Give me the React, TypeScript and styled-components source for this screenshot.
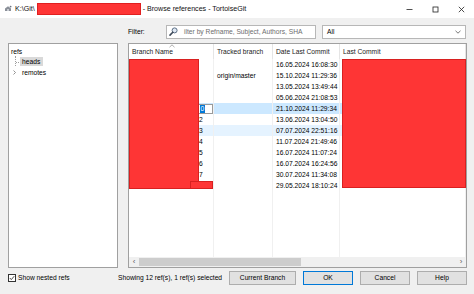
import styled, { createGlobalStyle, css } from 'styled-components';

const dates = [
  '16.05.2024 16:08:30',
  '15.10.2024 11:29:36',
  '13.05.2024 13:49:44',
  '05.06.2024 21:08:53',
  '21.10.2024 11:29:34',
  '13.06.2024 13:04:50',
  '07.07.2024 22:51:16',
  '11.07.2024 21:49:46',
  '16.07.2024 11:07:24',
  '16.07.2024 16:24:56',
  '30.07.2024 11:34:08',
  '29.05.2024 18:10:24',
];

// visible tail of each (redacted) branch name
const tails = ['', '', '', '', '', '2', '3', '4', '5', '6', '7', ''];
const tracked = ['', 'origin/master', '', '', '', '', '', '', '', '', '', ''];

const SELECTED = 4;
const HOT = 6;

const GlobalStyle = createGlobalStyle`
  html, body {
    margin: 0;
    padding: 0;
    width: 474px;
    height: 294px;
    overflow: hidden;
    background: #f0f0f0;
  }
  body {
    font-family: "Liberation Sans", Arial, sans-serif;
    font-size: 6.7px;
    color: #000;
  }
`;

const TurtleIcon = () => (
  <svg width="8" height="8" viewBox="0 0 8 8">
    <path d="M1 6 L1 3.5 L4 1.2 L7 3.5 L7 6 Z" fill="#8a8f98" />
    <rect x="3.2" y="4" width="1.6" height="2" fill="#d8dbe0" />
    <circle cx="6.6" cy="1.6" r="0.9" fill="#6b7380" />
  </svg>
);

const SearchIcon = () => (
  <svg width="9" height="9" viewBox="0 0 9 9">
    <circle cx="5.6" cy="3.4" r="2.5" fill="#dfe8f3" stroke="#5d6f86" strokeWidth="1" />
    <line x1="3.8" y1="5.3" x2="1" y2="8.1" stroke="#3e4a5a" strokeWidth="1.6" strokeLinecap="round" />
  </svg>
);

const App: React.FC = () => {
  return (
    <Window>
      <GlobalStyle />
      <TitleBar>
        <TurtleIcon />
        <TitleText>
          K:\Git\<TitleRedaction /> - Browse references - TortoiseGit
        </TitleText>
        <Controls>
          <ControlButton>
            <svg width="7" height="7" viewBox="0 0 7 7">
              <line x1="0.5" y1="3.5" x2="6.5" y2="3.5" stroke="#222" strokeWidth="0.8" />
            </svg>
          </ControlButton>
          <ControlButton>
            <svg width="7" height="7" viewBox="0 0 7 7">
              <rect x="1" y="1" width="5" height="5" fill="none" stroke="#222" strokeWidth="0.8" />
            </svg>
          </ControlButton>
          <ControlButton>
            <svg width="7" height="7" viewBox="0 0 7 7">
              <path d="M0.8 0.8 L6.2 6.2 M6.2 0.8 L0.8 6.2" stroke="#222" strokeWidth="0.8" />
            </svg>
          </ControlButton>
        </Controls>
      </TitleBar>

      <Content>
        <FilterBar>
          <FilterLabel>Filter:</FilterLabel>
          <SearchBox>
            <SearchIcon />
            <Placeholder>ilter by Refname, Subject, Authors, SHA</Placeholder>
          </SearchBox>
          <Combo>
            <span>All</span>
            <svg width="6" height="4" viewBox="0 0 6 4">
              <path d="M0.5 0.8 L3 3.2 L5.5 0.8" fill="none" stroke="#555" strokeWidth="0.8" />
            </svg>
          </Combo>
        </FilterBar>

        <TreePanel>
          <TreeRow>refs</TreeRow>
          <TreeRow>
            <Gutter $line />
            <TreeLabel $selected>heads</TreeLabel>
          </TreeRow>
          <TreeRow>
            <Gutter>
              <Expander>
                <svg width="3" height="5" viewBox="0 0 3 5">
                  <path d="M0.5 0.5 L2.5 2.5 L0.5 4.5" fill="none" stroke="#777" strokeWidth="0.8" />
                </svg>
              </Expander>
            </Gutter>
            <TreeLabel>remotes</TreeLabel>
          </TreeRow>
        </TreePanel>

        <ListPanel>
          <Header>
            <HeaderCell $col="branch">
              Branch Name
              <SortArrow>
                <svg width="6" height="4" viewBox="0 0 6 4">
                  <path d="M0.5 3.2 L3 0.8 L5.5 3.2" fill="none" stroke="#888" strokeWidth="0.7" />
                </svg>
              </SortArrow>
            </HeaderCell>
            <HeaderCell $col="tracked">Tracked branch</HeaderCell>
            <HeaderCell $col="date">Date Last Commit</HeaderCell>
            <HeaderCell $col="commit">Last Commit</HeaderCell>
          </Header>
          <Rows>
            {dates.map((d, i) => (
              <Row key={d} $state={i === SELECTED ? 'selected' : i === HOT ? 'hot' : 'none'}>
                <Cell $col="branch">
                  {i === SELECTED ? (
                    <EditBox>
                      <SelectedText>0</SelectedText>
                    </EditBox>
                  ) : (
                    <BranchTail>{tails[i]}</BranchTail>
                  )}
                </Cell>
                <Cell $col="tracked">{tracked[i]}</Cell>
                <Cell $col="date">{d}</Cell>
                <Cell $col="commit" />
              </Row>
            ))}
            <Filler>
              <Cell $col="branch" />
              <Cell $col="tracked" />
              <Cell $col="date" />
              <Cell $col="commit" />
            </Filler>
          </Rows>
          <ScrollBar>
            <ScrollArrow>‹</ScrollArrow>
            <Track>
              <Thumb />
            </Track>
            <ScrollArrow>›</ScrollArrow>
          </ScrollBar>

          <Redaction $left={0} $top={15} $width={70} $height={130} />
          <Redaction $left={61} $top={137} $width={23} $height={8} />
          <Redaction $left={213} $top={15} $width={124} $height={129} />
        </ListPanel>
      </Content>

      <Footer>
        <NestedToggle>
          <CheckBox>
            <svg width="6" height="6" viewBox="0 0 6 6">
              <path d="M0.8 3 L2.3 4.6 L5.2 1.2" fill="none" stroke="#222" strokeWidth="0.8" />
            </svg>
          </CheckBox>
          Show nested refs
        </NestedToggle>
        <Status>Showing 12 ref(s), 1 ref(s) selected</Status>
        <Buttons>
          <Button $wide>Current Branch</Button>
          <Button $default>OK</Button>
          <Button>Cancel</Button>
          <Button>Help</Button>
        </Buttons>
      </Footer>
    </Window>
  );
};

type Col = 'branch' | 'tracked' | 'date' | 'commit';

const colWidth = (col: Col) => {
  switch (col) {
    case 'branch':
      return css`width: 85px;`;
    case 'tracked':
      return css`width: 59px;`;
    case 'date':
      return css`width: 67px;`;
    default:
      return css`flex: 1;`;
  }
};

const Window = styled.div`
  width: 474px;
  height: 294px;
  display: flex;
  flex-direction: column;
  background: #f0f0f0;
`;

const TitleBar = styled.div`
  height: 18px;
  display: flex;
  align-items: center;
  padding-left: 4px;
  background: #fff;
`;

const TitleText = styled.div`
  margin-left: 3px;
  display: flex;
  align-items: center;
  white-space: pre;
  font-size: 7.1px;
  color: #111;
`;

const TitleRedaction = styled.span`
  display: inline-block;
  width: 104px;
  height: 12px;
  margin-left: 2px;
  background: #fe3535;
  border: 1px solid #e02020;
  box-sizing: border-box;
`;

const Controls = styled.div`
  margin-left: auto;
  display: flex;
`;

const ControlButton = styled.div`
  width: 26px;
  height: 18px;
  display: flex;
  align-items: center;
  justify-content: center;
`;

const Content = styled.div`
  display: grid;
  grid-template-columns: 110px 339px;
  grid-template-rows: 15px 225px;
  column-gap: 10px;
  row-gap: 4px;
  padding: 6px 7px 0 8px;
`;

const FilterBar = styled.div`
  grid-column: 2;
  display: flex;
  align-items: center;
  padding-right: 1px;
`;

const FilterLabel = styled.span`
  width: 38px;
`;

const SearchBox = styled.div`
  width: 150px;
  height: 14px;
  box-sizing: border-box;
  display: flex;
  align-items: center;
  padding-left: 2px;
  gap: 6px;
  background: #fff;
  border: 1px solid #b7b7b7;
  overflow: hidden;
`;

const Placeholder = styled.span`
  color: #6d6d6d;
  white-space: nowrap;
`;

const Combo = styled.div`
  flex: 1;
  margin-left: 6px;
  height: 14px;
  box-sizing: border-box;
  display: flex;
  align-items: center;
  justify-content: space-between;
  padding: 0 4px 0 4px;
  background: #fff;
  border: 1px solid #b7b7b7;
`;

const TreePanel = styled.div`
  background: #fff;
  border: 1px solid #a0a0a0;
  padding-top: 2px;
`;

const TreeRow = styled.div`
  height: 10.5px;
  display: flex;
  align-items: center;
  padding-left: 2px;
`;

const Gutter = styled.div<{ $line?: boolean }>`
  position: relative;
  width: 9px;
  height: 100%;
  margin-left: -2px;
  ${({ $line }) =>
    $line &&
    css`
      &::before {
        content: '';
        position: absolute;
        left: 6px;
        top: -1px;
        height: 10px;
        border-left: 1px dotted #a0a0a0;
      }
      &::after {
        content: '';
        position: absolute;
        left: 7px;
        top: 5px;
        width: 3px;
        border-top: 1px dotted #a0a0a0;
      }
    `}
`;

const Expander = styled.div`
  position: absolute;
  left: 4px;
  top: 3px;
  display: flex;
`;

const TreeLabel = styled.span<{ $selected?: boolean }>`
  margin-left: 2px;
  padding: 1px 3px 1px 2px;
  background: ${({ $selected }) => ($selected ? '#d9d9d9' : 'transparent')};
`;

const ListPanel = styled.div`
  position: relative;
  background: #fff;
  border: 1px solid #a0a0a0;
  display: flex;
  flex-direction: column;
  overflow: hidden;
`;

const Header = styled.div`
  height: 15px;
  flex-shrink: 0;
  display: flex;
`;

const HeaderCell = styled.div<{ $col: Col }>`
  ${({ $col }) => colWidth($col)}
  position: relative;
  box-sizing: border-box;
  padding-left: 3px;
  display: flex;
  align-items: center;
  border-right: 1px solid #e5e5e5;
  color: #1a1a1a;
  white-space: nowrap;
`;

const SortArrow = styled.div`
  position: absolute;
  left: 40px;
  top: 0;
  display: flex;
`;

const Rows = styled.div`
  flex: 1;
  display: flex;
  flex-direction: column;
`;

const Row = styled.div<{ $state: 'selected' | 'hot' | 'none' }>`
  height: 11px;
  display: flex;
  background: ${({ $state }) =>
    $state === 'selected' ? '#cce8ff' : $state === 'hot' ? '#e5f3ff' : 'transparent'};
`;

const Filler = styled.div`
  flex: 1;
  display: flex;
`;

const Cell = styled.div<{ $col: Col }>`
  ${({ $col }) => colWidth($col)}
  box-sizing: border-box;
  padding-left: 3px;
  display: flex;
  align-items: center;
  border-right: 1px solid #f0f0f0;
  white-space: nowrap;
  overflow: hidden;
`;

const BranchTail = styled.span`
  padding-left: 67px;
`;

const EditBox = styled.div`
  margin-left: 66px;
  width: 16px;
  height: 10px;
  box-sizing: border-box;
  display: flex;
  align-items: center;
  padding-left: 1px;
  background: #fff;
  border: 1px solid #9a9a9a;
`;

const SelectedText = styled.span`
  background: #0078d7;
  color: #fff;
  line-height: 8px;
  padding: 0 0.5px;
`;

const ScrollBar = styled.div`
  height: 10px;
  flex-shrink: 0;
  display: flex;
  align-items: center;
  background: #f0f0f0;
`;

const ScrollArrow = styled.span`
  width: 10px;
  text-align: center;
  color: #606060;
  font-size: 8px;
  line-height: 10px;
`;

const Track = styled.div`
  flex: 1;
  height: 8px;
`;

const Thumb = styled.div`
  width: 162px;
  height: 100%;
  background: #cdcdcd;
`;

const Redaction = styled.div<{ $left: number; $top: number; $width: number; $height: number }>`
  position: absolute;
  left: ${({ $left }) => $left}px;
  top: ${({ $top }) => $top}px;
  width: ${({ $width }) => $width}px;
  height: ${({ $height }) => $height}px;
  box-sizing: border-box;
  background: #fe3535;
  border: 1px solid #d82020;
`;

const Footer = styled.div`
  display: flex;
  align-items: center;
  height: 15px;
  padding: 2px 7px 0 8px;
`;

const NestedToggle = styled.label`
  width: 110px;
  display: flex;
  align-items: center;
  gap: 2px;
`;

const CheckBox = styled.span`
  width: 8px;
  height: 8px;
  box-sizing: border-box;
  display: flex;
  align-items: center;
  justify-content: center;
  background: #fff;
  border: 1px solid #333;
`;

const Status = styled.span`
  white-space: nowrap;
`;

const Buttons = styled.div`
  margin-left: auto;
  display: flex;
  gap: 7px;
`;

const Button = styled.button<{ $wide?: boolean; $default?: boolean }>`
  width: ${({ $wide }) => ($wide ? '67px' : '50px')};
  height: 14px;
  padding: 0;
  font: inherit;
  color: #000;
  background: #e1e1e1;
  border: 1px solid ${({ $default }) => ($default ? '#0078d7' : '#adadad')};
  border-radius: 0;
`;

export default App;
